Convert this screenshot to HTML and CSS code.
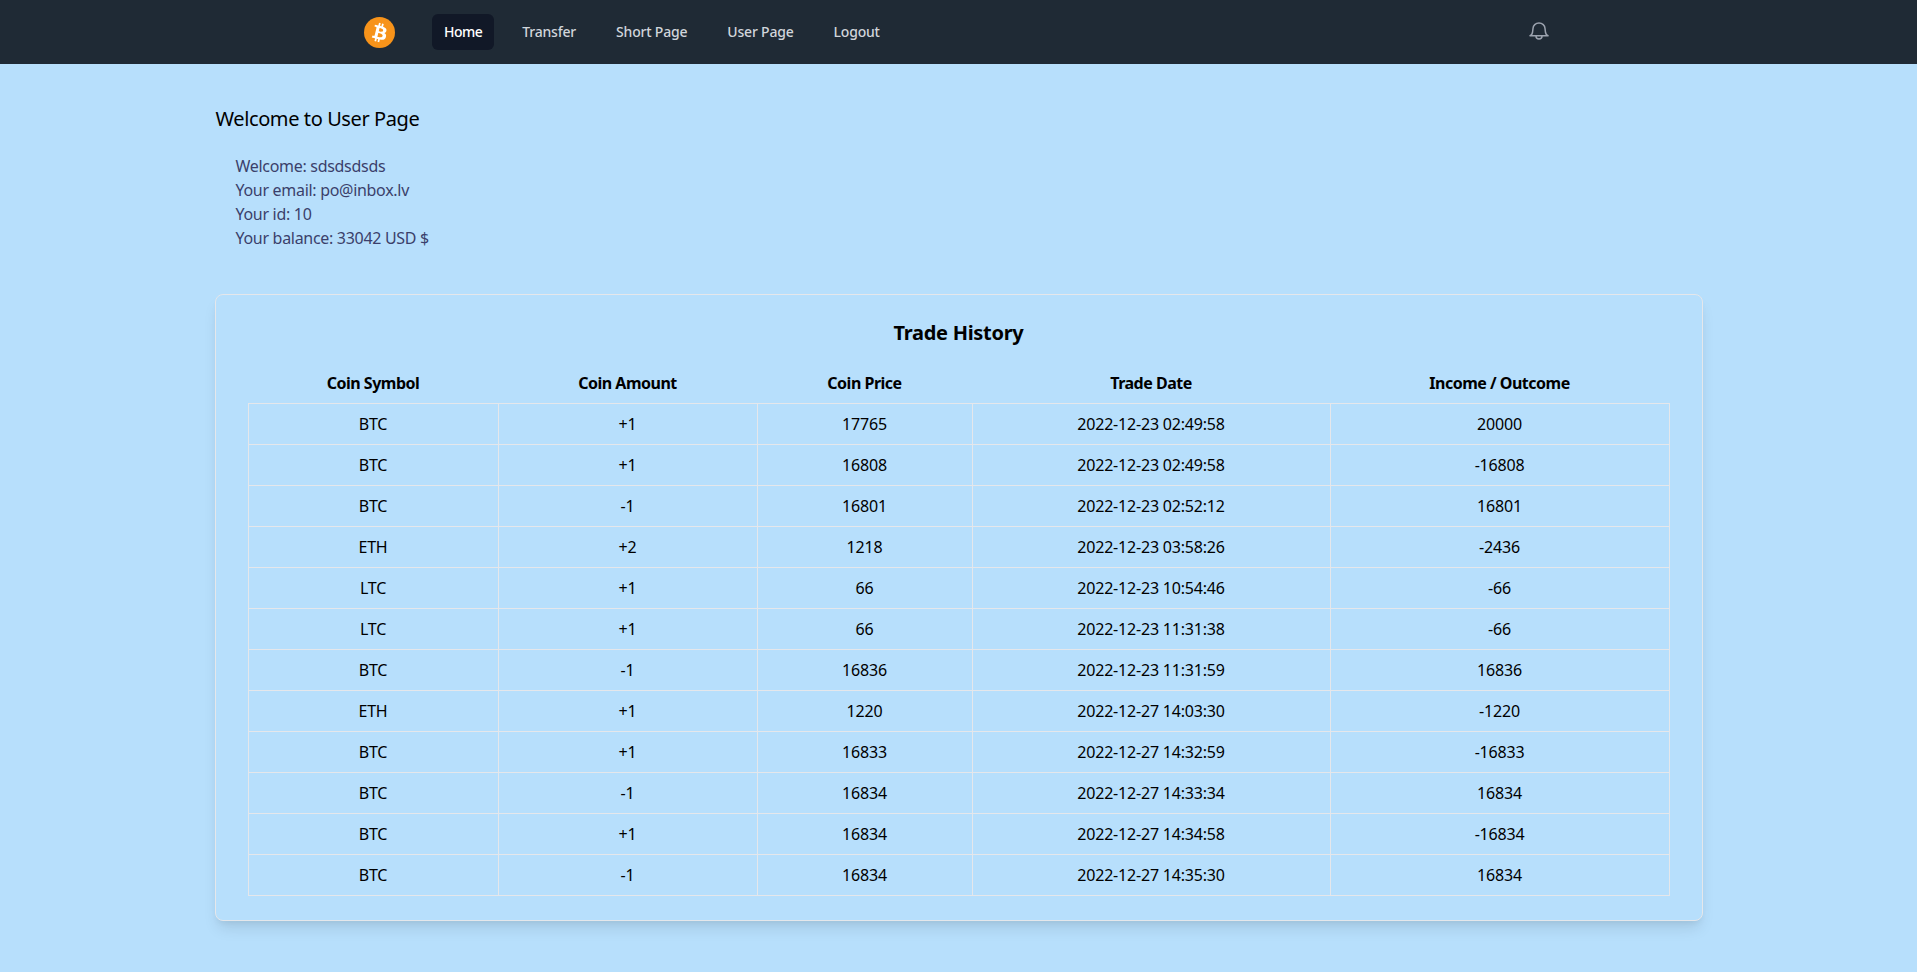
FILE: index.html
```html
<!DOCTYPE html>
<html lang="en">
<head>
<meta charset="utf-8">
<title>User Page</title>
<link rel="stylesheet" href="styles.css">
</head>
<body>
<nav class="navbar">
  <svg class="logo" viewBox="0 0 32 32" width="31" height="31" aria-label="Bitcoin">
    <circle cx="16" cy="16" r="16" fill="#f7931a"/>
    <path fill="#fff" d="M23.19 14.02c.32-2.12-1.3-3.26-3.5-4.02l.72-2.87-1.75-.44-.7 2.8c-.46-.12-.93-.23-1.4-.33l.7-2.81-1.74-.44-.72 2.87c-.38-.09-.75-.17-1.11-.26l-2.41-.6-.46 1.87s1.3.3 1.27.31c.71.18.84.65.82 1.02l-.82 3.27-1.15 4.58c-.09.22-.31.54-.81.42.02.03-1.27-.32-1.27-.32l-.87 2 2.27.57c.42.1.84.22 1.24.32l-.72 2.9 1.74.43.72-2.87c.48.13.94.25 1.39.36l-.71 2.86 1.75.44.72-2.9c2.98.57 5.22.34 6.16-2.36.76-2.17-.04-3.42-1.6-4.24 1.14-.26 2-1.01 2.23-2.56zm-3.99 5.6c-.54 2.17-4.2 1-5.38.7l.96-3.85c1.18.3 4.99.88 4.42 3.15zm.54-5.63c-.5 1.98-3.54.97-4.53.73l.87-3.49c.99.25 4.17.71 3.66 2.76z"/>
  </svg>
  <div class="nav-links">
    <a class="nav-link active" href="#">Home</a>
    <a class="nav-link" href="#">Transfer</a>
    <a class="nav-link" href="#">Short Page</a>
    <a class="nav-link" href="#">User Page</a>
    <a class="nav-link" href="#">Logout</a>
  </div>
  <svg class="bell" viewBox="0 0 24 24" width="24" height="24" fill="none" stroke="currentColor" stroke-width="1.5" stroke-linecap="round" stroke-linejoin="round" aria-label="Notifications">
    <path d="M3 15.700c1.500-.5 2.200-1.500 2.500-3.200L6 8.500a6 5.500 0 0 1 12 0l.5 4c.3 1.700 1 2.700 2.500 3.200z"/>
    <path d="M9 16c0 4 6 4 6 0"/>
  </svg>
</nav>
<main class="page">
  <h1 class="welcome-title">Welcome to User Page</h1>
  <div class="user-info">
    <p>Welcome: sdsdsdsds</p>
    <p>Your email: po@inbox.lv</p>
    <p>Your id: 10</p>
    <p>Your balance: 33042 USD $</p>
  </div>
  <section class="card">
    <h2 class="card-title">Trade History</h2>
    <table class="trades">
      <colgroup>
        <col class="col-a"><col class="col-b"><col class="col-c"><col class="col-d"><col class="col-e">
      </colgroup>
      <thead>
        <tr><th>Coin Symbol</th><th>Coin Amount</th><th>Coin Price</th><th>Trade Date</th><th>Income / Outcome</th></tr>
      </thead>
      <tbody>
        <tr><td>BTC</td><td>+1</td><td>17765</td><td>2022-12-23 02:49:58</td><td>20000</td></tr>
        <tr><td>BTC</td><td>+1</td><td>16808</td><td>2022-12-23 02:49:58</td><td>-16808</td></tr>
        <tr><td>BTC</td><td>-1</td><td>16801</td><td>2022-12-23 02:52:12</td><td>16801</td></tr>
        <tr><td>ETH</td><td>+2</td><td>1218</td><td>2022-12-23 03:58:26</td><td>-2436</td></tr>
        <tr><td>LTC</td><td>+1</td><td>66</td><td>2022-12-23 10:54:46</td><td>-66</td></tr>
        <tr><td>LTC</td><td>+1</td><td>66</td><td>2022-12-23 11:31:38</td><td>-66</td></tr>
        <tr><td>BTC</td><td>-1</td><td>16836</td><td>2022-12-23 11:31:59</td><td>16836</td></tr>
        <tr><td>ETH</td><td>+1</td><td>1220</td><td>2022-12-27 14:03:30</td><td>-1220</td></tr>
        <tr><td>BTC</td><td>+1</td><td>16833</td><td>2022-12-27 14:32:59</td><td>-16833</td></tr>
        <tr><td>BTC</td><td>-1</td><td>16834</td><td>2022-12-27 14:33:34</td><td>16834</td></tr>
        <tr><td>BTC</td><td>+1</td><td>16834</td><td>2022-12-27 14:34:58</td><td>-16834</td></tr>
        <tr><td>BTC</td><td>-1</td><td>16834</td><td>2022-12-27 14:35:30</td><td>16834</td></tr>
      </tbody>
    </table>
  </section>
</main>
</body>
</html>
```
FILE: styles.css
```css
* { box-sizing: border-box; }
html, body { margin: 0; padding: 0; }
body {
  min-height: 972px;
  background: #b7dffc;
  color: #000;
  font-family: "Noto Sans", "Open Sans", sans-serif;
}
.navbar {
  display: flex;
  align-items: center;
  height: 64px;
  padding: 0 0 0 364px;
  background: #1f2a35;
}
.logo { flex: none; }
.nav-links {
  display: flex;
  gap: 16px;
  margin-left: 37px;
}
.nav-link {
  display: block;
  padding: 8px 12px;
  border-radius: 6px;
  color: #d1d5db;
  font-size: 14px;
  font-weight: 500;
  letter-spacing: -0.2px;
  line-height: 20px;
  text-decoration: none;
}
.nav-link.active { background: #111827; color: #fff; letter-spacing: -0.5px; }
.bell { flex: none; margin-left: auto; margin-right: 366px; color: #9ca3af; }
.page { width: 1488px; margin: 0 auto; padding-top: 41px; }
.welcome-title { margin: 0; padding-left: 1px; font-size: 20px; font-weight: 400; letter-spacing: -0.4px; line-height: 28px; }
.user-info { margin-top: 21px; padding-left: 21px; color: #3b3f6b; font-size: 16px; letter-spacing: -0.3px; line-height: 24px; }
.user-info p { margin: 0; }
.card {
  margin-top: 44px;
  height: 627px;
  padding: 24px 32px 0;
  background: #b7dffc;
  border: 1px solid #e5e7eb;
  border-radius: 8px;
  box-shadow: 0 10px 15px -3px rgba(0,0,0,.1), 0 4px 6px -2px rgba(0,0,0,.05);
}
.card-title { margin: 0; font-size: 20px; font-weight: 700; letter-spacing: -0.3px; line-height: 28px; text-align: center; }
.trades { width: 1421px; margin-top: 11px; border-collapse: collapse; table-layout: fixed; font-size: 16px; letter-spacing: -0.2px; }
.col-a { width: 250px; }
.col-b { width: 259px; }
.col-c { width: 215px; }
.col-d { width: 358px; }
.col-e { width: 339px; }
.trades th { height: 45px; font-weight: 700; letter-spacing: -0.5px; text-align: center; padding: 6px 0 0; }
.trades td { height: 41px; padding: 0; text-align: center; border: 1px solid #e5e7eb; }
```
